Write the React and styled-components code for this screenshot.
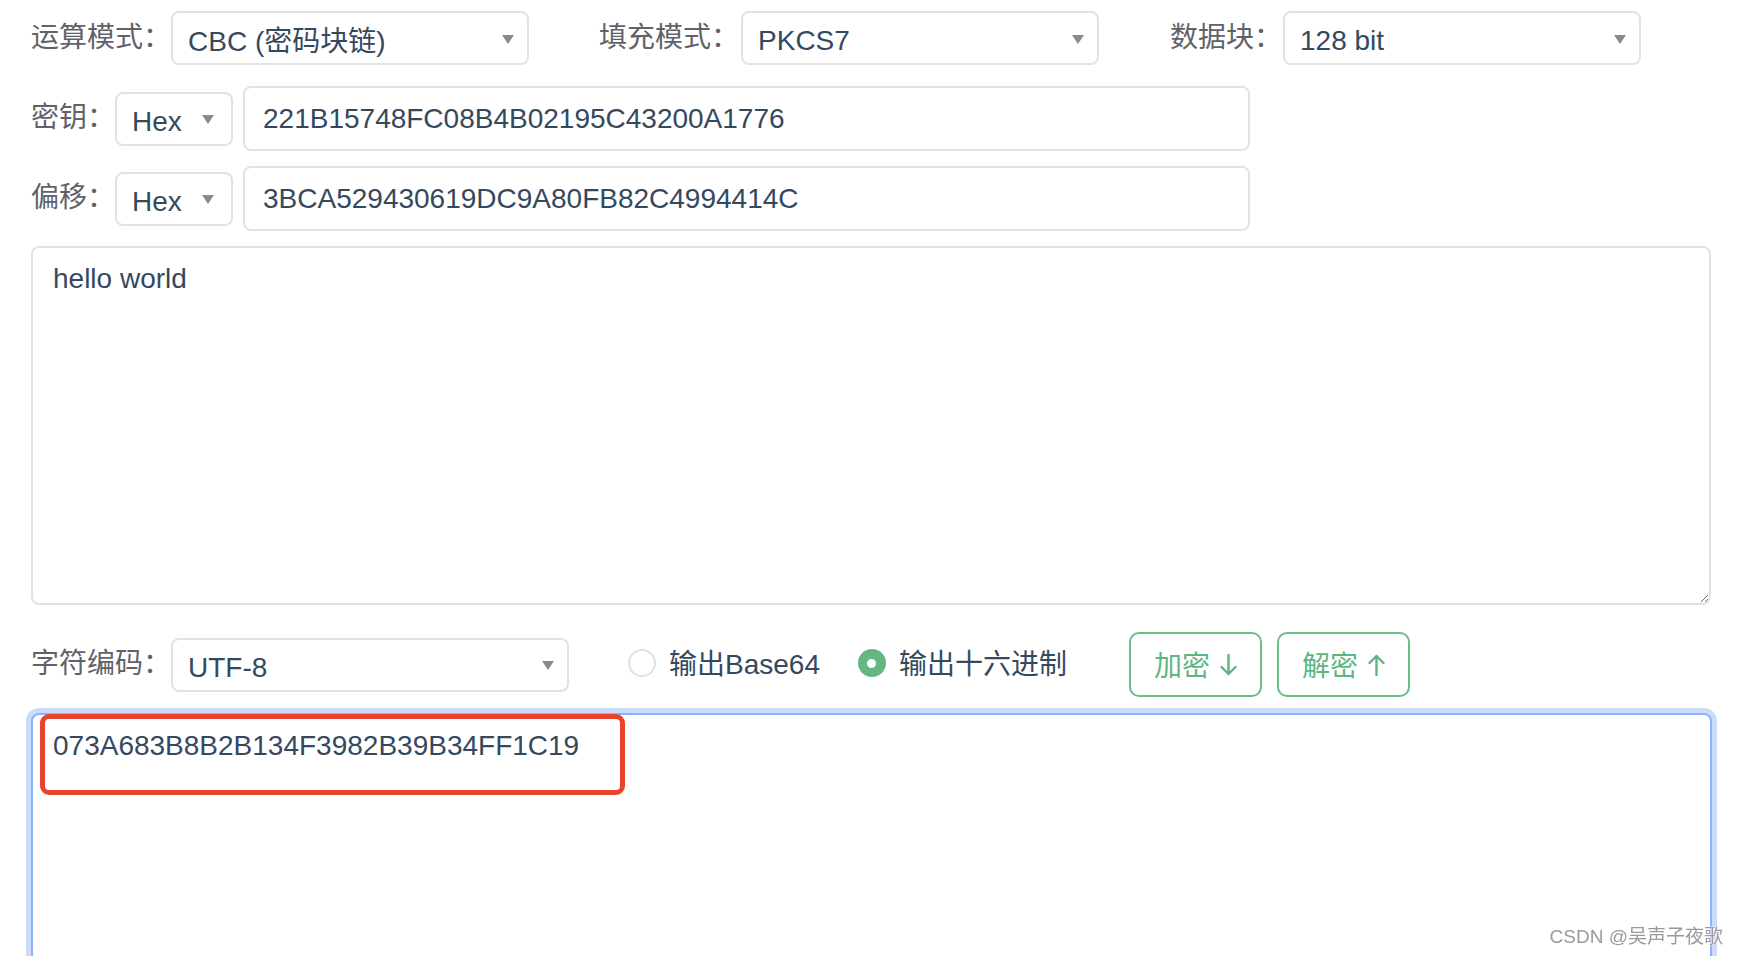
import React from 'react';
import styled, { createGlobalStyle } from 'styled-components';

const GlobalStyle = createGlobalStyle`
  html, body { margin: 0; padding: 0; background: #fff; overflow: hidden; }
  body { font-family: "Liberation Sans", "Noto Sans CJK SC", sans-serif; }
  * { box-sizing: border-box; }
`;

const Page = styled.div`
  padding: 11px 0 0 31px;
  width: 1738px;
`;

const Row = styled.div`
  display: flex;
  align-items: center;
  height: ${(p) => p.$h || 54}px;
  margin-top: ${(p) => p.$mt || 0}px;
`;

const Field = styled.div`
  display: flex;
  align-items: center;
  margin-left: ${(p) => p.$ml || 0}px;
`;

const Label = styled.span`
  font-family: "Noto Sans CJK SC", sans-serif;
  font-size: 28px;
  line-height: 1;
  padding-bottom: 7px;
  color: #5f6368;
  white-space: nowrap;
`;

const SelectBox = styled.div`
  display: flex;
  align-items: center;
  width: ${(p) => p.$w}px;
  height: 54px;
  margin-left: ${(p) => p.$ml || 0}px;
  padding: ${(p) => (p.$cjk ? 2 : 6)}px 0 0 15px;
  border: 2px solid #dfe2e8;
  border-radius: 8px;
  background: #fff;
  font-size: 28px;
  color: #35495e;
  white-space: nowrap;
`;

const Caret = styled.span`
  margin-left: auto;
  margin-right: ${(p) => p.$r || 13}px;
  margin-top: ${(p) => (p.$cjk ? 0 : -4)}px;
  width: 0;
  height: 0;
  border-left: 6.5px solid transparent;
  border-right: 6.5px solid transparent;
  border-top: 9px solid #8a8a8a;
`;

const TextInput = styled.div`
  display: flex;
  align-items: center;
  width: 1007px;
  height: 65px;
  margin-left: 10px;
  padding-left: 18px;
  border: 2px solid #dfe2e8;
  border-radius: 8px;
  font-size: 28px;
  color: #35495e;
`;

const TextArea = styled.textarea`
  display: block;
  width: 1680px;
  height: 359px;
  margin: 15px 0 0 0;
  padding: 10px 20px;
  border: 2px solid #dfe2e8;
  border-radius: 8px;
  font-family: "Liberation Sans", "Noto Sans CJK SC", sans-serif;
  font-size: 28px;
  line-height: 42px;
  color: #35495e;
  resize: vertical;
  outline: none;
`;

const RadioGroup = styled.div`
  display: flex;
  align-items: center;
  margin-left: 59px;
`;

const Radio = styled.label`
  display: flex;
  align-items: center;
  margin-left: ${(p) => p.$ml || 0}px;
  padding-bottom: 6px;
  font-size: 28px;
  color: #35495e;
  white-space: nowrap;
`;

const Dot = styled.span`
  display: flex;
  align-items: center;
  justify-content: center;
  width: 28px;
  height: 28px;
  margin-right: 13px;
  margin-top: 3px;
  border-radius: 50%;
  border: ${(p) => (p.$on ? 'none' : '2px solid #dfe2e8')};
  background: ${(p) => (p.$on ? '#64b785' : '#fff')};
  &::after {
    content: '';
    display: ${(p) => (p.$on ? 'block' : 'none')};
    width: 9px;
    height: 9px;
    border-radius: 50%;
    background: #fff;
  }
`;

const Buttons = styled.div`
  display: flex;
  align-items: center;
  margin-left: 62px;
  gap: 15px;
`;

const Button = styled.button`
  display: flex;
  align-items: center;
  justify-content: center;
  gap: 10px;
  width: 133px;
  height: 65px;
  padding: 0;
  border: 2px solid #6cbb8b;
  border-radius: 10px;
  background: #fff;
  color: #5eb581;
  font-family: "Noto Sans CJK SC", sans-serif;
  font-size: 28px;
  line-height: 1;
  cursor: pointer;
`;

const ButtonText = styled.span`
  padding-bottom: 2px;
`;

const OutputWrap = styled.div`
  position: relative;
  margin-top: 16px;
  width: 1681px;
`;

const Output = styled.textarea`
  display: block;
  width: 1681px;
  height: 300px;
  margin: 0;
  padding: 10px 20px;
  border: 2px solid #8cb3f7;
  border-radius: 8px;
  box-shadow: 0 0 0 5px #cadbfb;
  font-family: "Liberation Sans", "Noto Sans CJK SC", sans-serif;
  font-size: 28px;
  line-height: 42px;
  color: #35495e;
  resize: none;
  outline: none;
`;

const Highlight = styled.div`
  position: absolute;
  left: 9px;
  top: 1px;
  width: 585px;
  height: 81px;
  border: 5px solid #e8432c;
  border-radius: 9px;
  pointer-events: none;
`;

const Watermark = styled.div`
  position: fixed;
  right: 15px;
  bottom: 8px;
  font-family: "Liberation Sans", "Noto Sans CJK SC", sans-serif;
  font-size: 19px;
  color: #9a9a9a;
  text-shadow: 0 0 2px #fff, 0 0 2px #fff;
  white-space: nowrap;
`;

const Arrow = ({ up }) => (
  <svg width="17" height="22" viewBox="0 0 17 22" fill="none" stroke="currentColor" strokeWidth="2.4" strokeLinecap="round" strokeLinejoin="round">
    {up ? (
      <path d="M8.5 21V2 M1.5 9 L8.5 2 L15.5 9" />
    ) : (
      <path d="M8.5 1V20 M1.5 13 L8.5 20 L15.5 13" />
    )}
  </svg>
);

export default function App() {
  return (
    <>
      <GlobalStyle />
      <Page>
        <Row $h={54}>
          <Field>
            <Label>运算模式：</Label>
            <SelectBox $w={358} $cjk>
              CBC (密码块链)
              <Caret $r={13} $cjk />
            </SelectBox>
          </Field>
          <Field $ml={70}>
            <Label>填充模式：</Label>
            <SelectBox $w={358} $ml={2}>
              PKCS7
              <Caret $r={13} />
            </SelectBox>
          </Field>
          <Field $ml={71}>
            <Label>数据块：</Label>
            <SelectBox $w={358} $ml={1}>
              128 bit
              <Caret $r={13} />
            </SelectBox>
          </Field>
        </Row>

        <Row $h={65} $mt={21}>
          <Label>密钥：</Label>
          <SelectBox $w={118}>
            Hex
            <Caret $r={17} />
          </SelectBox>
          <TextInput>221B15748FC08B4B02195C43200A1776</TextInput>
        </Row>

        <Row $h={65} $mt={15}>
          <Label>偏移：</Label>
          <SelectBox $w={118}>
            Hex
            <Caret $r={17} />
          </SelectBox>
          <TextInput>3BCA529430619DC9A80FB82C4994414C</TextInput>
        </Row>

        <TextArea defaultValue="hello world" spellCheck={false} />

        <Row $h={65} $mt={27}>
          <Field>
            <Label>字符编码：</Label>
            <SelectBox $w={398}>
              UTF-8
              <Caret $r={13} />
            </SelectBox>
          </Field>
          <RadioGroup>
            <Radio>
              <Dot />
              输出Base64
            </Radio>
            <Radio $ml={38}>
              <Dot $on />
              输出十六进制
            </Radio>
          </RadioGroup>
          <Buttons>
            <Button>
              <ButtonText>加密</ButtonText>
              <Arrow />
            </Button>
            <Button>
              <ButtonText>解密</ButtonText>
              <Arrow up />
            </Button>
          </Buttons>
        </Row>

        <OutputWrap>
          <Output defaultValue="073A683B8B2B134F3982B39B34FF1C19" spellCheck={false} />
          <Highlight />
        </OutputWrap>
      </Page>
      <Watermark>CSDN @吴声子夜歌</Watermark>
    </>
  );
}
